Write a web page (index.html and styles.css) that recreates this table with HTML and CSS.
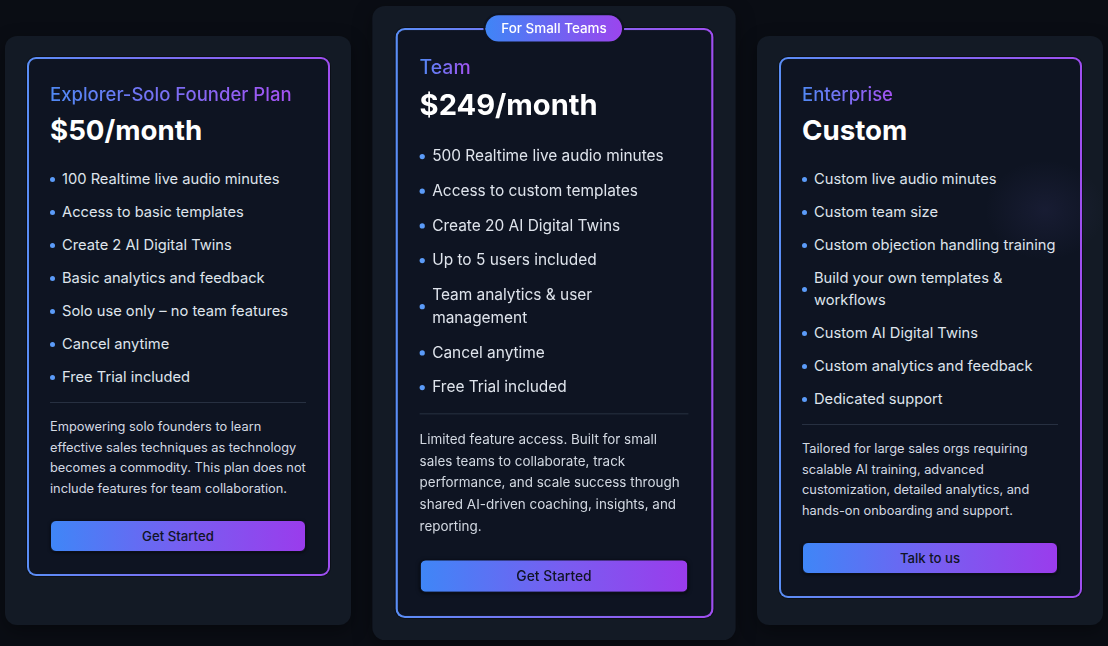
FILE: index.html
```html
<!DOCTYPE html>
<html lang="en">
<head>
<meta charset="utf-8">
<title>Pricing</title>
<link rel="stylesheet" href="styles.css">
</head>
<body>
<div class="glow"></div>
<main class="pricing">
  <section class="plan plan-side">
    <div class="card">
      <h2 class="name"><span>Explorer-Solo Founder Plan</span></h2>
      <div class="price">$50/month</div>
      <ul class="features">
        <li>100 Realtime live audio minutes</li>
        <li>Access to basic templates</li>
        <li>Create 2 AI Digital Twins</li>
        <li>Basic analytics and feedback</li>
        <li>Solo use only – no team features</li>
        <li>Cancel anytime</li>
        <li>Free Trial included</li>
      </ul>
      <p class="desc">Empowering solo founders to learn effective sales techniques as technology becomes a commodity. This plan does not include features for team collaboration.</p>
      <button class="cta">Get Started</button>
    </div>
  </section>

  <section class="plan plan-featured">
    <div class="card">
      <div class="badge">For Small Teams</div>
      <h2 class="name"><span>Team</span></h2>
      <div class="price">$249/month</div>
      <ul class="features">
        <li>500 Realtime live audio minutes</li>
        <li>Access to custom templates</li>
        <li>Create 20 AI Digital Twins</li>
        <li>Up to 5 users included</li>
        <li>Team analytics &amp; user management</li>
        <li>Cancel anytime</li>
        <li>Free Trial included</li>
      </ul>
      <p class="desc">Limited feature access. Built for small sales teams to collaborate, track performance, and scale success through shared AI-driven coaching, insights, and reporting.</p>
      <button class="cta">Get Started</button>
    </div>
  </section>

  <section class="plan plan-side">
    <div class="card">
      <h2 class="name"><span>Enterprise</span></h2>
      <div class="price">Custom</div>
      <ul class="features">
        <li>Custom live audio minutes</li>
        <li>Custom team size</li>
        <li>Custom objection handling training</li>
        <li>Build your own templates &amp; workflows</li>
        <li>Custom AI Digital Twins</li>
        <li>Custom analytics and feedback</li>
        <li>Dedicated support</li>
      </ul>
      <p class="desc">Tailored for large sales orgs requiring scalable AI training, advanced customization, detailed analytics, and hands-on onboarding and support.</p>
      <button class="cta">Talk to us</button>
    </div>
  </section>
</main>
</body>
</html>
```

FILE: styles.css
```css
* { box-sizing: border-box; }

html, body {
  margin: 0;
  height: 100%;
}

body {
  background: #0a0d14;
  font-family: Inter, "Noto Sans", "Liberation Sans", sans-serif;
  color: #e2e7ef;
  overflow: hidden;
  position: relative;
}

.glow {
  position: absolute;
  left: 985px;
  top: 160px;
  width: 120px;
  height: 100px;
  background: radial-gradient(closest-side, rgba(120, 110, 220, 0.09), rgba(120, 110, 220, 0));
  pointer-events: none;
  z-index: 2;
}

.pricing {
  display: flex;
  align-items: flex-start;
  gap: 30px;
  padding: 21px 0 0 5px;
}

.plan {
  width: 346px;
  flex: none;
  padding: 21px 21.5px;
  background: #131a25;
  border-radius: 12px;
  box-shadow: 0 6px 18px rgba(0, 0, 0, 0.35);
}

.plan-side {
  margin-top: 15px;
  height: 589px;
}

.plan-featured {
  transform: scale(1.05);
  position: relative;
  z-index: 1;
}

.card {
  position: relative;
  padding: 23px 21.5px 22px;
  border: 2px solid transparent;
  border-radius: 9px;
  background:
    linear-gradient(#0e1422, #0e1422) padding-box,
    linear-gradient(90deg, #5a8ef6, #9f4ef0) border-box;
  box-shadow: 0 0 0 1px rgba(0, 0, 0, 0.35);
}

.badge {
  position: absolute;
  top: -14.5px;
  left: 50%;
  transform: translateX(-50%);
  height: 25px;
  padding: 0 15px;
  display: flex;
  align-items: center;
  border-radius: 13px;
  background: linear-gradient(90deg, #3f85f6, #9b45ee);
  color: #ffffff;
  font-size: 12.8px;
  font-weight: 500;
  white-space: nowrap;
  box-shadow: 0 0 0 2px #0e1422;
}

.name {
  margin: 0;
  font-size: 18.5px;
  font-weight: 500;
  line-height: 24px;
}

.name span {
  background: linear-gradient(90deg, #5089f4, #a552f2);
  -webkit-background-clip: text;
  background-clip: text;
  color: transparent;
}

.price {
  margin-top: 6px;
  font-size: 27.7px;
  font-weight: 700;
  line-height: 36px;
  color: #ffffff;
}

.features {
  list-style: none;
  margin: 20px 0 0;
  padding: 0;
  display: flex;
  flex-direction: column;
  gap: 11px;
}

.features li {
  display: flex;
  align-items: center;
  gap: 7px;
  font-size: 14.7px;
  line-height: 22px;
  color: #dfe4ec;
}

.features li::before {
  content: "";
  flex: none;
  width: 5px;
  height: 5px;
  border-radius: 50%;
  background: #5b9bf8;
}

.desc {
  margin: 14px 0 0;
  padding-top: 14px;
  border-top: 1px solid #273041;
  font-size: 12.8px;
  line-height: 20.7px;
  color: #d3d9e2;
}

.cta {
  display: block;
  width: 100%;
  height: 32px;
  margin-top: 20px;
  border: 1px solid #0b0f1a;
  border-radius: 6px;
  background: linear-gradient(90deg, #3f86f7, #7a5cf0 55%, #9a3cec);
  color: #101425;
  font-family: inherit;
  font-size: 13.2px;
  font-weight: 500;
  cursor: pointer;
  box-shadow: 0 1px 3px rgba(0, 0, 0, 0.5);
}
```
